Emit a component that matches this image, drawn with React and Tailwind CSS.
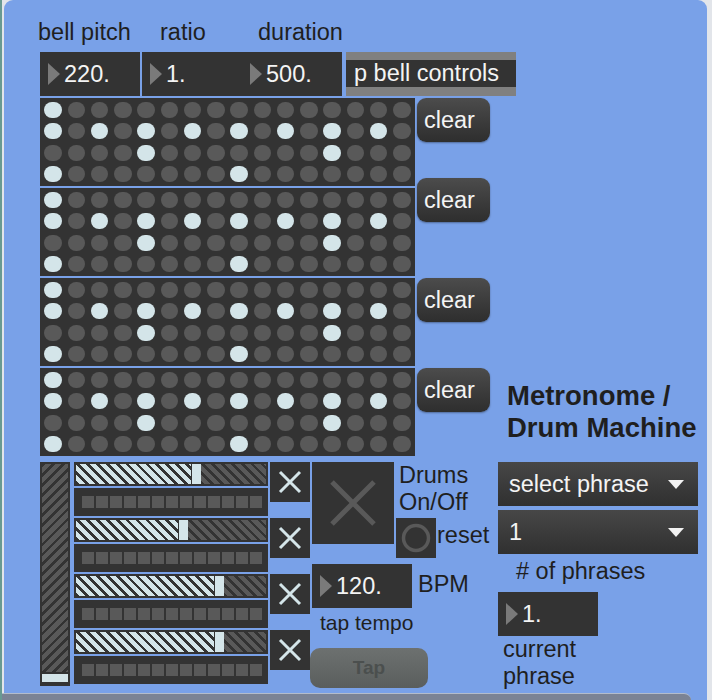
import React from "react";

const rows = [[0], [0, 2, 4, 6, 8, 10, 12, 14], [4, 12], [0, 8]];

const Arrow = () => (
  <svg width="12" height="22" viewBox="0 0 12 22" className="shrink-0">
    <polygon points="0,0 12,11 0,22" fill="#7a7a7a" />
  </svg>
);

const Caret = () => (
  <svg width="16" height="9" viewBox="0 0 16 9">
    <polygon points="0,0 16,0 8,9" fill="#f2f2f2" />
  </svg>
);

const NumBox = ({ value, className = "" }) => (
  <div className={`flex h-[44px] items-center bg-[#333333] pl-[8px] ${className}`}>
    <Arrow />
    <span className="ml-[4px] text-[#f4f4f4]">{value}</span>
  </div>
);

const Matrix = () => (
  <div className="grid h-[88px] w-[375px] grid-cols-16 grid-rows-4 bg-[#333333] p-[1.5px]">
    {rows.map((lit, r) =>
      Array.from({ length: 16 }, (_, c) => (
        <div key={r + "-" + c} className="flex items-center justify-center">
          <div
            className={
              lit.includes(c)
                ? "h-[16px] w-[17.5px] rounded-full bg-[#d4e5e9]"
                : "h-[16px] w-[17.5px] rounded-full bg-[#595959]"
            }
          />
        </div>
      ))
    )}
  </div>
);

const Clear = ({ className = "" }) => (
  <button
    className={`ml-[2px] flex h-[44px] w-[73px] items-center rounded-[9px] bg-gradient-to-b from-[#4c4c4c] to-[#2e2e2e] pl-[7px] text-[#f4f4f4] shadow-[0_1px_2px_rgba(0,0,0,0.35)] ${className}`}
  >
    clear
  </button>
);

const HSlider = ({ fill }) => (
  <div className="flex h-[24px] w-[194px] bg-[#333333] p-[2px]">
    <div
      className="h-full bg-[repeating-linear-gradient(45deg,#333333_0px,#333333_2.6px,#d4e5e9_2.6px,#d4e5e9_7px)]"
      style={{ width: fill }}
    />
    <div className="ml-[1px] h-full w-[9px] bg-[#d4e5e9]" />
    <div className="h-full flex-1 bg-[repeating-linear-gradient(45deg,#333333_0px,#333333_2.6px,#595959_2.6px,#595959_7px)]" />
  </div>
);

const Meter = () => (
  <div className="flex h-[28px] w-[194px] items-center gap-[2px] bg-[#333333] pl-[8px]">
    {Array.from({ length: 13 }, (_, i) => (
      <div key={i} className="h-[12px] w-[12px] bg-[#595959]" />
    ))}
  </div>
);

const Toggle = () => (
  <div className="h-[40px] w-[40px] bg-[#333333]">
    <svg width="40" height="40" viewBox="0 0 40 40">
      <path d="M10 10 L30 30 M30 10 L10 30" stroke="#d4e5e9" strokeWidth="3" />
    </svg>
  </div>
);

const Dropdown = ({ label }) => (
  <div className="flex h-[44px] w-[200px] items-center justify-between bg-gradient-to-b from-[#474747] to-[#303030] pl-[11px] pr-[14px] text-[#f4f4f4]">
    <span>{label}</span>
    <Caret />
  </div>
);

const sliders = [115, 102, 138, 138];

export default function App() {
  return (
    <div className="flex h-[700px] w-[712px] overflow-hidden border-l-2 border-[#689a92] bg-[#e2e5ea] font-['Liberation_Sans',Arial,Helvetica,sans-serif] text-[23.5px] leading-[28px] text-[#1f1f1f]">
      <div className="ml-[2px] mr-[5px] flex flex-1 flex-col rounded-t-[9px] bg-[#79a1e8] pl-[36px] pt-[18px]">
        {/* labels */}
        <div className="flex whitespace-nowrap">
          <span className="ml-[-2px] w-[122px]">bell pitch</span>
          <span className="w-[98px]">ratio</span>
          <span>duration</span>
        </div>

        {/* number boxes */}
        <div className="mt-[6px] flex">
          <NumBox value="220." className="w-[100px]" />
          <div className="ml-[2px] flex">
            <NumBox value="1." className="w-[100px]" />
            <NumBox value="500." className="w-[100px]" />
          </div>
          <div className="ml-[4px] flex h-[44px] w-[170px] flex-col bg-[#808080] py-[8px]">
            <div className="flex h-[27px] items-center bg-[#333333] pl-[8px] leading-[27px] text-[#f4f4f4]">
              p bell controls
            </div>
          </div>
        </div>

        {/* sequencer grids */}
        <div className="mt-[2px] flex flex-col gap-[2px]">
          <div className="flex items-start">
            <Matrix />
            <Clear />
          </div>
          <div className="flex items-start">
            <Matrix />
            <Clear className="-mt-[10px]" />
          </div>
          <div className="flex items-start">
            <Matrix />
            <Clear />
          </div>
          <div className="flex items-start">
            <Matrix />
            <Clear />
            <div className="ml-[17px] mt-[12px] whitespace-nowrap text-[27.5px] font-bold leading-[32px]">
              Metronome /<br />
              Drum Machine
            </div>
          </div>
        </div>

        {/* metronome / drum machine */}
        <div className="mt-[6px] flex items-start">
          <div className="flex h-[224px] w-[30px] flex-col gap-[2px] bg-[#333333] p-[2px]">
            <div className="flex-1 bg-[repeating-linear-gradient(135deg,#333333_0px,#333333_2.6px,#595959_2.6px,#595959_7px)]" />
            <div className="mb-[2px] h-[8px] bg-[#d4e5e9]" />
          </div>

          <div className="ml-[4px] flex flex-col gap-[2px]">
            {sliders.map((f, i) => (
              <React.Fragment key={i}>
                <HSlider fill={f} />
                <Meter />
              </React.Fragment>
            ))}
          </div>

          <div className="ml-[2px] flex flex-col gap-[16px]">
            <Toggle />
            <Toggle />
            <Toggle />
            <Toggle />
          </div>

          <div className="ml-[2px] flex w-[186px] flex-col">
            <div className="flex items-start">
              <div className="h-[82px] w-[82px] shrink-0 bg-[#333333]">
                <svg width="82" height="82" viewBox="0 0 82 82">
                  <path d="M20 20 L62 62 M62 20 L20 62" stroke="#595959" strokeWidth="5" />
                </svg>
              </div>
              <div className="ml-[2px] flex flex-col">
                <div className="pl-[3px] leading-[27px]">
                  Drums
                  <br />
                  On/Off
                </div>
                <div className="mt-[2px] flex items-start">
                  <div className="h-[40px] w-[40px] bg-[#333333]">
                    <svg width="40" height="40" viewBox="0 0 40 40">
                      <circle cx="20" cy="20" r="12.5" fill="none" stroke="#595959" strokeWidth="3.5" />
                    </svg>
                  </div>
                  <span className="ml-[1px] mt-[3px]">reset</span>
                </div>
              </div>
            </div>

            <div className="mt-[6px] flex items-start">
              <NumBox value="120." className="w-[100px]" />
              <span className="ml-[6px] mt-[6px]">BPM</span>
            </div>

            <div className="ml-[8px] mt-[3px] text-[21px] leading-[24px]">tap tempo</div>

            <button className="-ml-[2px] mt-[13px] flex h-[40px] w-[118px] items-center justify-center rounded-[10px] bg-gradient-to-b from-[#6d7170] to-[#5a5e5d] text-[19px] font-bold text-[#4b4f4e]">
              Tap
            </button>
          </div>

          <div className="flex w-[200px] flex-col">
            <Dropdown label="select phrase" />
            <div className="mt-[4px]">
              <Dropdown label="1" />
            </div>
            <div className="mt-[3px] pl-[18px]">
              # of phrases
            </div>
            <NumBox value="1." className="mt-[7px] w-[100px]" />
            <div className="pl-[5px] leading-[27px]">
              current
              <br />
              phrase
            </div>
          </div>
        </div>

        <div className="-ml-[38px] mr-[16px] mt-auto h-[7px] rounded-tr-[8px] border-t border-[#b3bccb] bg-[#7b8394]" />
      </div>
    </div>
  );
}
